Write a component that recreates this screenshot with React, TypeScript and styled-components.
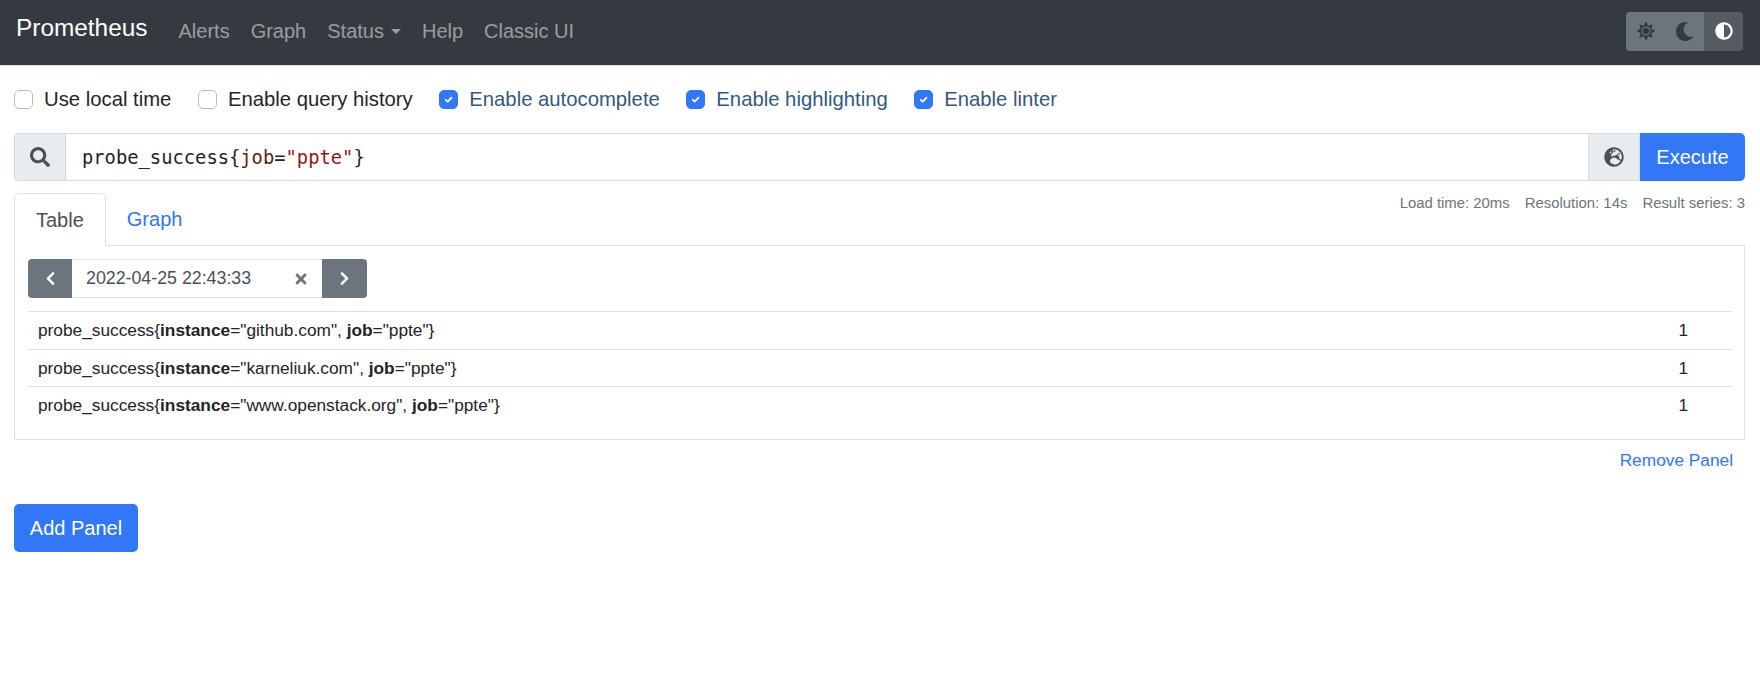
import React from 'react';
import styled, { createGlobalStyle } from 'styled-components';
import {
  FaAdjust,
  FaChevronLeft,
  FaChevronRight,
  FaGlobeEurope,
  FaMoon,
  FaSearch,
  FaSun,
  FaTimes,
} from 'react-icons/fa';

const options = [
  { label: 'Use local time', checked: false },
  { label: 'Enable query history', checked: false },
  { label: 'Enable autocomplete', checked: true },
  { label: 'Enable highlighting', checked: true },
  { label: 'Enable linter', checked: true },
];

const series = ['github.com', 'karneliuk.com', 'www.openstack.org'];

const App = () => {
  return (
    <>
      <GlobalStyle />
      <Navbar>
        <Brand>Prometheus</Brand>
        <NavLinks>
          <NavLink>Alerts</NavLink>
          <NavLink>Graph</NavLink>
          <NavLink>
            Status
            <Caret />
          </NavLink>
          <NavLink>Help</NavLink>
          <NavLink>Classic UI</NavLink>
        </NavLinks>
        <ThemeToggle>
          <ThemeButton>
            <FaSun size={18} />
          </ThemeButton>
          <ThemeButton>
            <FaMoon size={19} />
          </ThemeButton>
          <ThemeButton $active>
            <FaAdjust size={18} />
          </ThemeButton>
        </ThemeToggle>
      </Navbar>
      <Main>
        <Options>
          {options.map((option) => (
            <Option key={option.label} $checked={option.checked}>
              <Checkbox $checked={option.checked}>
                {option.checked && (
                  <svg width="11" height="11" viewBox="0 0 20 20">
                    <path
                      d="M5 10.5l3.5 3.5 7-7.5"
                      fill="none"
                      stroke="#fff"
                      strokeWidth="3.2"
                      strokeLinecap="round"
                      strokeLinejoin="round"
                    />
                  </svg>
                )}
              </Checkbox>
              {option.label}
            </Option>
          ))}
        </Options>
        <QueryGroup>
          <Addon $side="left">
            <FaSearch size={20} />
          </Addon>
          <QueryText>
            probe_success{'{'}
            <LabelName>job</LabelName>=<LabelValue>"ppte"</LabelValue>
            {'}'}
          </QueryText>
          <Addon $side="right">
            <FaGlobeEurope size={20} />
          </Addon>
          <ExecuteButton>Execute</ExecuteButton>
        </QueryGroup>
        <TabsRow>
          <ActiveTab>Table</ActiveTab>
          <Tab>Graph</Tab>
          <Stats>
            <span>Load time: 20ms</span>
            <span>Resolution: 14s</span>
            <span>Result series: 3</span>
          </Stats>
        </TabsRow>
        <Panel>
          <TimeGroup>
            <TimeButton $side="left">
              <FaChevronLeft size={15} />
            </TimeButton>
            <TimeValue>
              2022-04-25 22:43:33
              <FaTimes size={16} color="#6c757d" />
            </TimeValue>
            <TimeButton $side="right">
              <FaChevronRight size={15} />
            </TimeButton>
          </TimeGroup>
          <Table>
            {series.map((instance) => (
              <Row key={instance}>
                <span>
                  probe_success{'{'}
                  <b>instance</b>="{instance}", <b>job</b>="ppte"{'}'}
                </span>
                <Value>1</Value>
              </Row>
            ))}
          </Table>
        </Panel>
        <RemoveRow>
          <RemoveLink>Remove Panel</RemoveLink>
        </RemoveRow>
        <AddButton>Add Panel</AddButton>
      </Main>
    </>
  );
};

export default App;

// css

const GlobalStyle = createGlobalStyle`
  * {
    box-sizing: border-box;
  }

  body {
    margin: 0;
    background: #fff;
    color: #212529;
    font-family: "Liberation Sans", Arial, sans-serif;
    font-size: 18px;
  }
`;

const Navbar = styled.nav`
  display: flex;
  align-items: center;
  height: 66px;
  padding: 0 16px;
  border-bottom: 1px solid #dcdee0;
  background: #343a40;
`;

const Brand = styled.div`
  margin-right: 31px;
  margin-top: -9px;
  color: #fff;
  font-size: 24.4px;
`;

const NavLinks = styled.div`
  display: flex;
  gap: 21px;
  margin-top: -3px;
`;

const NavLink = styled.div`
  display: flex;
  align-items: center;
  color: rgba(255, 255, 255, 0.5);
  font-size: 20px;
`;

const Caret = styled.span`
  margin-left: 7px;
  border-top: 5px solid rgba(255, 255, 255, 0.5);
  border-left: 5.5px solid transparent;
  border-right: 5.5px solid transparent;
`;

const ThemeToggle = styled.div`
  display: flex;
  margin-left: auto;
  margin-right: 1px;
  margin-top: -3px;
  border-radius: 4px;
  overflow: hidden;
`;

const ThemeButton = styled.div<{ $active?: boolean }>`
  display: flex;
  align-items: center;
  justify-content: center;
  width: 39px;
  height: 39px;
  background: ${({ $active }) => ($active ? '#545b62' : '#6c757d')};
  color: ${({ $active }) => ($active ? '#fff' : '#343a40')};
`;

const Main = styled.main`
  padding: 0 15px 0 14px;
`;

const Options = styled.div`
  display: flex;
  gap: 26.5px;
  align-items: center;
  height: 67px;
`;

const Option = styled.label<{ $checked: boolean }>`
  display: flex;
  align-items: center;
  gap: 11px;
  color: ${({ $checked }) => ($checked ? '#33597f' : '#212529')};
  font-size: 20.3px;
`;

const Checkbox = styled.span<{ $checked: boolean }>`
  display: flex;
  align-items: center;
  justify-content: center;
  width: 19px;
  height: 19px;
  border: 1px solid ${({ $checked }) => ($checked ? '#3277f6' : '#b9bcbf')};
  border-radius: 5px;
  background: ${({ $checked }) => ($checked ? '#3277f6' : '#fff')};
`;

const QueryGroup = styled.div`
  display: flex;
  height: 48px;
`;

const Addon = styled.div<{ $side: 'left' | 'right' }>`
  display: flex;
  flex: none;
  align-items: center;
  justify-content: center;
  width: 52px;
  border: 1px solid #d8dbde;
  border-radius: ${({ $side }) => ($side === 'left' ? '4px 0 0 4px' : '0')};
  background: #e9ecef;
  color: #495057;
`;

const QueryText = styled.div`
  display: flex;
  flex: 1;
  align-items: center;
  padding-left: 16px;
  border-top: 1px solid #d8dbde;
  border-bottom: 1px solid #d8dbde;
  color: #212529;
  font-family: "DejaVu Sans Mono", monospace;
  font-size: 18.8px;
  white-space: pre;
`;

const LabelName = styled.span`
  color: #5f1a1a;
`;

const LabelValue = styled.span`
  color: #8b1a1a;
`;

const ExecuteButton = styled.button`
  flex: none;
  width: 105px;
  border: none;
  border-radius: 0 5px 5px 0;
  background: #3277f6;
  color: #fff;
  font-family: inherit;
  font-size: 20px;
`;

const TabsRow = styled.div`
  display: flex;
  align-items: flex-start;
  height: 65px;
  padding-top: 12px;
  border-bottom: 1px solid #dee2e6;
`;

const Tab = styled.div`
  display: flex;
  align-items: center;
  height: 52px;
  padding: 0 21px;
  color: #3277f6;
  font-size: 20px;
`;

const ActiveTab = styled(Tab)`
  position: relative;
  height: 53px;
  border: 1px solid #dee2e6;
  border-bottom: none;
  border-radius: 5px 5px 0 0;
  background: #fff;
  color: #495057;
`;

const Stats = styled.div`
  display: flex;
  gap: 15px;
  margin-left: auto;
  margin-top: 2px;
  color: #6c757d;
  font-size: 14.9px;
`;

const Panel = styled.div`
  height: 194px;
  padding: 13px 12px 0 13px;
  border: 1px solid #dee2e6;
  border-top: none;
`;

const TimeGroup = styled.div`
  display: flex;
  width: 339px;
  height: 39px;
`;

const TimeButton = styled.div<{ $side: 'left' | 'right' }>`
  display: flex;
  flex: none;
  align-items: center;
  justify-content: center;
  width: ${({ $side }) => ($side === 'left' ? '44px' : '45px')};
  border-radius: ${({ $side }) => ($side === 'left' ? '4px 0 0 4px' : '0 4px 4px 0')};
  background: #6c757d;
  color: #fff;
`;

const TimeValue = styled.div`
  display: flex;
  flex: 1;
  align-items: center;
  justify-content: space-between;
  padding: 0 13px 0 14px;
  border-top: 1px solid #dee2e6;
  border-bottom: 1px solid #dee2e6;
  color: #495057;
  font-size: 17.8px;
`;

const Table = styled.div`
  margin-top: 13px;
`;

const Row = styled.div`
  display: flex;
  align-items: center;
  height: 37.7px;
  padding: 0 44px 0 10px;
  border-top: 1px solid #dee2e6;
  color: #212529;
  font-size: 17.3px;
`;

const Value = styled.span`
  margin-left: auto;
`;

const RemoveRow = styled.div`
  display: flex;
  justify-content: flex-end;
  align-items: center;
  height: 41px;
  padding-right: 12px;
`;

const RemoveLink = styled.a`
  color: #3277f6;
  font-size: 17.3px;
`;

const AddButton = styled.button`
  display: block;
  width: 124px;
  height: 48px;
  margin-top: 23px;
  border: none;
  border-radius: 5px;
  background: #3277f6;
  color: #fff;
  font-family: inherit;
  font-size: 20px;
`;
